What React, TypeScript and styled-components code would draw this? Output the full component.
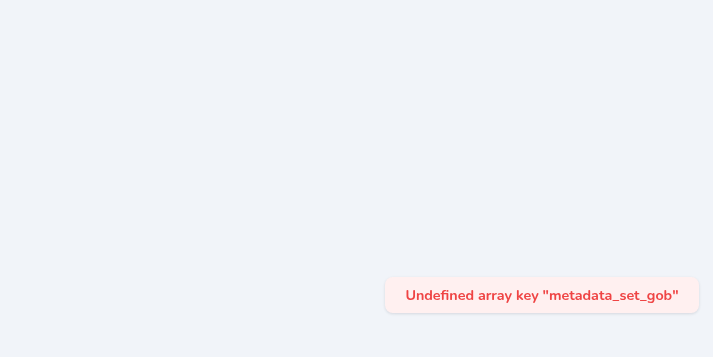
import React from "react";
import styled, { createGlobalStyle } from "styled-components";

const GlobalStyle = createGlobalStyle`
    html, body {
        margin: 0;
        padding: 0;
        background: #f1f4f9;
        font-family: "Nunito", "Lato", "Noto Sans", sans-serif;
    }
`;

const Page = styled.div`
    width: 100%;
    height: 100vh;
    background: #f1f4f9;
`;

const Toast = styled.div`
    position: fixed;
    right: 14px;
    bottom: 44px;
    width: 314px;
    height: 36px;
    box-sizing: border-box;
    display: flex;
    align-items: center;
    justify-content: center;
    background: #fff0f0;
    border-radius: 8px;
    box-shadow: 0 1px 3px rgba(15, 23, 42, 0.12);
    color: #ef4444;
    font-size: 14.3px;
    font-weight: 700;
    white-space: nowrap;
`;

const App = () => {
    return (
        <Page>
            <GlobalStyle />
            <Toast>Undefined array key "metadata_set_gob"</Toast>
        </Page>
    );
};

export default App;
